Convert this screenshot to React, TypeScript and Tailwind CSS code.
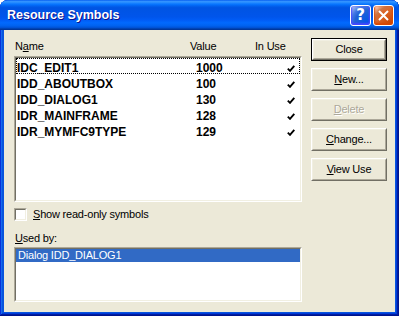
import React from "react";

const rows: [string, string][] = [
  ["IDC_EDIT1", "1000"],
  ["IDD_ABOUTBOX", "100"],
  ["IDD_DIALOG1", "130"],
  ["IDR_MAINFRAME", "128"],
  ["IDR_MYMFC9TYPE", "129"],
];

function Check() {
  return (
    <svg width="8" height="7" viewBox="0 0 8 7" className="block">
      <path d="M0.8 3.6 L3 5.8 L7.3 0.8" fill="none" stroke="#000" strokeWidth="1.9" />
    </svg>
  );
}

function Sunken({ className, children }: { className: string; children?: React.ReactNode }) {
  return (
    <div className={"border border-t-[#ACA899] border-l-[#ACA899] border-b-white border-r-white " + className}>
      <div className="h-full border border-t-[#716F64] border-l-[#716F64] border-b-[#F1EFE2] border-r-[#F1EFE2] bg-white">
        {children}
      </div>
    </div>
  );
}

function Btn({ children, def, disabled }: { children: React.ReactNode; def?: boolean; disabled?: boolean }) {
  const face = (
    <div className="h-full border border-t-white border-l-white border-b-[#716F64] border-r-[#716F64]">
      <div className="h-full border border-t-[#F1EFE2] border-l-[#F1EFE2] border-b-[#ACA899] border-r-[#ACA899] flex items-center justify-center">
        <span
          className={
            disabled
              ? "text-[#ACA899] [text-shadow:1px_1px_0_#fff]"
              : "text-black"
          }
        >
          {children}
        </span>
      </div>
    </div>
  );
  return def ? (
    <div className="h-[23px] w-[76px] border border-black">{face}</div>
  ) : (
    <div className="h-[23px] w-[76px]">{face}</div>
  );
}

export default function App() {
  return (
    <div className="w-[399px] h-[316px] bg-white font-['Liberation_Sans',Arial,sans-serif] text-[11px] tracking-[-0.2px] text-black">
      <div className="w-full h-full rounded-t-[8px] overflow-hidden bg-[#ECE9D8] flex flex-col shadow-[inset_-1px_-1px_#00138c,inset_1px_1px_#0831d9,inset_-2px_-2px_#001ea0,inset_2px_2px_#166aee,inset_-3px_-3px_#003bda,inset_3px_3px_#0855dd,inset_-4px_-4px_#0855dd,inset_4px_4px_#0855dd]">
        {/* Title bar */}
        <div className="h-[30px] shrink-0 flex items-center pl-[7px] pr-[5px] bg-[linear-gradient(180deg,#0058ee_0%,#3593ff_4%,#288eff_8%,#127dff_12%,#036ffc_16%,#0262ee_20%,#0057e5_24%,#0054e3_28%,#0055eb_56%,#005bf5_66%,#026afe_76%,#0062ef_86%,#0052d6_92%,#0040ab_96%,#003092_100%)]">
          <span className="flex-1 text-white font-bold text-[12.5px] tracking-[0px] [text-shadow:1px_1px_#0f1089] font-['Liberation_Sans',Arial,sans-serif]">
            Resource Symbols
          </span>
          <div className="flex gap-[2px]">
            <div className="w-[21px] h-[21px] rounded-[3px] border border-white bg-[radial-gradient(circle_at_90%_90%,#0054e9_0%,#2263d5_55%,#4479e4_70%,#a3bbec_90%,#fff_100%)] shadow-[inset_0_-1px_2px_1px_#4646ff] flex items-center justify-center">
              <span className="text-white font-bold text-[15px] leading-none font-['DejaVu_Sans',sans-serif]">?</span>
            </div>
            <div className="w-[21px] h-[21px] rounded-[3px] border border-white bg-[radial-gradient(circle_at_90%_90%,#cc4600_0%,#dc6527_55%,#cd7546_70%,#ffccb2_90%,#fff_100%)] shadow-[inset_0_-1px_2px_1px_#da4600] flex items-center justify-center">
              <svg width="11" height="11" viewBox="0 0 11 11">
                <path d="M1 1 L10 10 M10 1 L1 10" stroke="#fff" strokeWidth="2" />
              </svg>
            </div>
          </div>
        </div>

        {/* Client */}
        <div className="flex-1 mx-[4px] mb-[4px] flex pl-[10px]">
          <div className="w-[288px] flex flex-col">
            <div className="mt-[10px] h-[13px] leading-[13px] grid grid-cols-[175px_65px_1fr] pl-[1px]">
              <span>
                N<u className="underline-offset-[1px]">a</u>me
              </span>
              <span>Value</span>
              <span>In Use</span>
            </div>
            <Sunken className="mt-[3px] h-[146px]">
              <div className="flex flex-col">
                {rows.map(([n, v], i) => (
                  <div
                    key={n}
                    className={
                      "h-[16px] grid grid-cols-[179px_80px_1fr] items-center font-bold text-[12px] tracking-[0px] " +
                      (i === 0 ? "border border-dotted border-black" : "border border-transparent")
                    }
                  >
                    <span className="pl-[0px]">{n}</span>
                    <span>{v}</span>
                    <span className="pl-[11px]">
                      <Check />
                    </span>
                  </div>
                ))}
              </div>
            </Sunken>
            <div className="mt-[6px] h-[13px] flex items-center gap-[6px]">
              <Sunken className="w-[13px] h-[13px]" />
              <span className="leading-[13px]">
                <u className="underline-offset-[1px]">S</u>how read-only symbols
              </span>
            </div>
            <div className="mt-[11px] h-[13px] leading-[13px] pl-[1px]">
              <u className="underline-offset-[1px]">U</u>sed by:
            </div>
            <Sunken className="mt-[2px] h-[55px]">
              <div className="h-[13px] leading-[13px] bg-[#316AC5] text-white pl-[2px]">Dialog IDD_DIALOG1</div>
            </Sunken>
          </div>
          <div className="ml-[9px] mt-[8px] flex flex-col gap-[7px]">
            <Btn def>Close</Btn>
            <Btn>
              <u className="underline-offset-[1px]">N</u>ew...
            </Btn>
            <Btn disabled>
              <u className="underline-offset-[1px]">D</u>elete
            </Btn>
            <Btn>
              <u className="underline-offset-[1px]">C</u>hange...
            </Btn>
            <Btn>
              <u className="underline-offset-[1px]">V</u>iew Use
            </Btn>
          </div>
        </div>
      </div>
    </div>
  );
}
